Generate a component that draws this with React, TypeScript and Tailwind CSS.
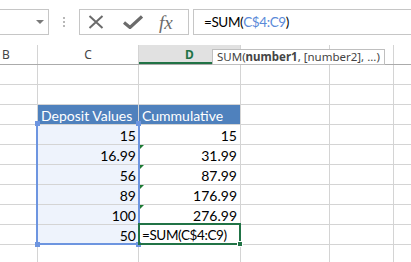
import { useState } from 'react';

type Row = { c?: string; d?: string; header?: boolean; formula?: boolean; flag?: boolean };

const rows: Row[] = [
  {},
  {},
  { c: 'Deposit Values', d: 'Cummulative', header: true },
  { c: '15', d: '15' },
  { c: '16.99', d: '31.99', flag: true },
  { c: '56', d: '87.99', flag: true },
  { c: '89', d: '176.99', flag: true },
  { c: '100', d: '276.99', flag: true },
  { c: '50', d: '=SUM(C$4:C9)', formula: true },
  {},
];

function FormulaBar() {
  const [text] = useState('=SUM(C$4:C9)');
  return (
    <div className="flex h-[45px] items-start pt-[9px]">
      {/* name box */}
      <div className="relative h-[26px] w-[49px] border border-l-0 border-[#c6c6c6]">
        <div className="absolute left-[36px] top-[10px] h-0 w-0 border-x-[4px] border-t-[4px] border-x-transparent border-t-[#7a7a7a]" />
      </div>
      <div className="flex h-[26px] w-[30px] flex-col items-center justify-center gap-[2px]">
        <span className="h-[2px] w-[2px] bg-[#b8b8b8]" />
        <span className="h-[2px] w-[2px] bg-[#b8b8b8]" />
        <span className="h-[2px] w-[2px] bg-[#b8b8b8]" />
      </div>
      {/* cancel / enter / fx */}
      <div className="flex h-[26px] w-[110px] items-center border border-[#c6c6c6]">
        <svg width="16" height="14" viewBox="0 0 16 14" className="ml-[8px]">
          <path d="M1.5 1 L14.5 13 M14.5 1 L1.5 13" stroke="#6b6b6b" strokeWidth="2" fill="none" />
        </svg>
        <svg width="20" height="14" viewBox="0 0 20 14" className="ml-[19px]">
          <path d="M1 7.5 L7 12.5 L19 1.5" stroke="#6b6b6b" strokeWidth="3.2" fill="none" strokeLinejoin="miter" />
        </svg>
        <span className="ml-[16px] font-['Liberation_Serif',serif] text-[19px] italic leading-none text-[#6b6b6b]">fx</span>
      </div>
      <div className="ml-[4px] flex h-[26px] flex-1 items-center border border-r-0 border-[#c6c6c6] pl-[10px] pt-[1px] text-[13.5px] tracking-[-0.4px] text-black">
        {text.slice(0, 5)}
        <span className="text-[#5b8ad8]">C$4:C9</span>
        {text.slice(11)}
      </div>
    </div>
  );
}

function ColumnHeaders() {
  return (
    <div className="flex h-[20px] border-b border-[#ababab] font-['Noto_Sans',sans-serif] text-[12px] text-[#444]">
      <div className="flex w-[38px] items-center border-r border-[#d4d4d4] pl-[2px]">B</div>
      <div className="flex w-[101px] items-center justify-center border-r border-[#d4d4d4]">C</div>
      <div className="flex w-[102px] items-center justify-center border-b-2 border-r border-[#d4d4d4] border-b-[#217346] bg-[#e1e1e1] pt-[2px] font-bold text-[#217346]">
        D
      </div>
      <div className="w-[89px] border-r border-[#d4d4d4]" />
      <div className="w-[64px] border-r border-[#d4d4d4]" />
      <div className="flex-1" />
    </div>
  );
}

function GridRow({ row }: { row: Row }) {
  const cell = 'h-[20px] border-b border-r border-[#d4d4d4] leading-[21px] whitespace-nowrap overflow-visible';
  const head = row.header ? 'bg-[#4f81bd] text-white border-[#4f81bd]' : '';
  return (
    <div className="flex">
      <div className={`${cell} w-[38px]`} />
      <div className={`${cell} w-[101px] ${head} ${row.header ? 'pl-[3px] text-left' : 'pr-[2px] text-right'}`}>{row.c}</div>
      <div
        className={`${cell} relative w-[102px] ${head} ${
          row.header || row.formula ? 'pl-[3px] text-left' : 'pr-[3px] text-right'
        } ${row.formula ? 'text-[13.5px] tracking-[-0.4px]' : ''}`}
      >
        {row.flag && (
          <span className="absolute left-0 top-0 h-0 w-0 border-r-[5px] border-t-[5px] border-r-transparent border-t-[#1e7b34]" />
        )}
        {row.d}
      </div>
      <div className={`${cell} w-[89px]`} />
      <div className={`${cell} w-[64px]`} />
      <div className={`${cell} flex-1 border-r-0`} />
    </div>
  );
}

export default function App() {
  return (
    <div className="relative h-[262px] w-[411px] overflow-hidden bg-white font-['Lato',sans-serif] text-[14px] text-black">
      <FormulaBar />
      <ColumnHeaders />
      <div className="relative">
        {/* light fill of the referenced range */}
        <div className="absolute left-[38px] top-[60px] h-[120px] w-[100px] bg-[#eef3fc]" />
        <div className="relative">
          {rows.map((row, i) => (
            <GridRow key={i} row={row} />
          ))}
        </div>
      </div>

      {/* range reference highlight C4:C9 */}
      <div className="absolute left-[36px] top-[124px] h-[121px] w-[104px] border-x-2 border-b-2 border-[#6d95e0]" />
      <div className="absolute left-[35px] top-[121px] h-[5px] w-[5px] bg-[#6d95e0]" />
      <div className="absolute left-[136px] top-[121px] h-[5px] w-[5px] bg-[#6d95e0]" />
      <div className="absolute left-[35px] top-[242px] h-[5px] w-[5px] bg-[#6d95e0]" />
      <div className="absolute left-[136px] top-[242px] h-[5px] w-[5px] bg-[#6d95e0]" />

      {/* active cell D9 */}
      <div className="absolute left-[138px] top-[223px] h-[22px] w-[103px] border-2 border-[#217346]" />
      <div className="absolute left-[237px] top-[241px] h-[6px] w-[6px] border border-white bg-[#217346]" />

      {/* function tooltip */}
      <div className="absolute left-[212px] top-[49px] flex h-[16px] w-[173px] items-center border border-[#bfbfbf] bg-white pl-[4px] font-['Noto_Sans',sans-serif] text-[11.5px] text-[#444]">
        SUM(<b className="font-bold">number1</b>, [number2], ...)
      </div>
    </div>
  );
}
